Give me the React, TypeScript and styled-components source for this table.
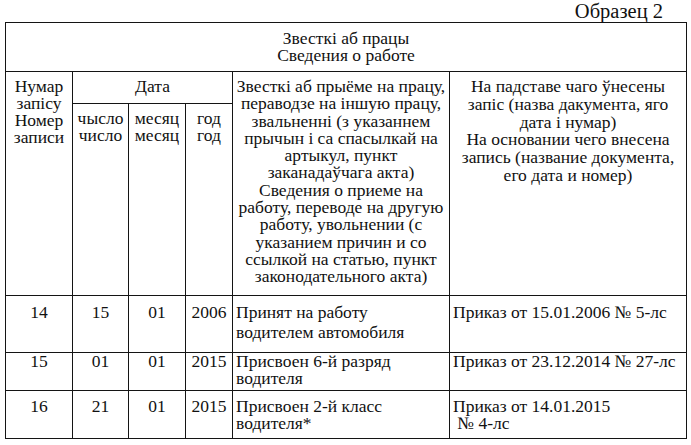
import React from 'react'
import styled, { createGlobalStyle } from 'styled-components'

const GlobalStyle = createGlobalStyle`
    html, body {
        margin: 0;
        padding: 0;
        background: #ffffff;
    }
    body {
        font-family: "Liberation Serif", "Times New Roman", serif;
        color: #111111;
    }
`

const Page = styled.div`
    width: 691px;
    height: 445px;
    padding-left: 5px;
    box-sizing: border-box;
    overflow: hidden;
`

const Caption = styled.div`
    width: 681px;
    height: 22px;
    padding-right: 23px;
    box-sizing: border-box;
    text-align: right;
    font-family: "Liberation Serif", "Times New Roman", serif;
    font-size: 20.5px;
    line-height: 22px;
`

const Sheet = styled.table`
    width: 681px;
    border-collapse: collapse;
    table-layout: fixed;
    font-family: "Liberation Serif", "Times New Roman", serif;
    font-size: 17.5px;
    color: #111111;
`

const Col = styled.col<{ $w: number }>`
    width: ${(p) => p.$w}px;
`

const Row = styled.tr<{ $h: number }>`
    height: ${(p) => p.$h}px;
`

const Cell = styled.td<{
    $align?: 'left' | 'center'
    $valign?: 'top' | 'middle'
    $pt?: number
    $lh?: number
}>`
    border: 1px solid #141414;
    padding: ${(p) => p.$pt ?? 0}px ${(p) => (p.$align === 'left' ? 3 : 0)}px 0;
    text-align: ${(p) => p.$align ?? 'center'};
    vertical-align: ${(p) => p.$valign ?? 'top'};
    line-height: ${(p) => p.$lh ?? 17.3}px;
    white-space: nowrap;
    overflow: hidden;
`

const Line = styled.span`
    display: block;
`

const lines = (text: string) =>
    text.split('\n').map((t, i) => <Line key={i}>{t}</Line>)

const entries = [
    { no: '14', day: '15', month: '01', year: '2006', what: 'Принят на работу\nводителем автомобиля', basis: 'Приказ от 15.01.2006 № 5-лс', h: 57, pt: 7, lh: 19.5 },
    { no: '15', day: '01', month: '01', year: '2015', what: 'Присвоен 6-й разряд\nводителя', basis: 'Приказ от 23.12.2014 № 27-лс', h: 38, pt: 0, lh: 16.5 },
    { no: '16', day: '21', month: '01', year: '2015', what: 'Присвоен 2-й класс\nводителя*', basis: 'Приказ от 14.01.2015\n\u00a0№ 4-лс', h: 48, pt: 7, lh: 17 },
]

const App: React.FC = () => {
    return (
        <Page>
            <GlobalStyle />
            <Caption>Образец 2</Caption>
            <Sheet>
                <colgroup>
                    <Col $w={67} />
                    <Col $w={56} />
                    <Col $w={57} />
                    <Col $w={47} />
                    <Col $w={217} />
                    <Col $w={237} />
                </colgroup>
                <tbody>
                    <Row $h={49}>
                        <Cell colSpan={6} $valign="middle" $lh={17}>
                            {lines('Звесткі аб працы\nСведения о работе')}
                        </Cell>
                    </Row>
                    <Row $h={32}>
                        <Cell rowSpan={2} $pt={6} $lh={17}>
                            {lines('Нумар\nзапісу\nНомер\nзаписи')}
                        </Cell>
                        <Cell colSpan={3} $pt={6}>
                            Дата
                        </Cell>
                        <Cell rowSpan={2} $pt={6}>
                            {lines(
                                'Звесткі аб прыёме на працу,\nпераводзе на іншую працу,\nзвальненні (з указаннем\nпрычын і са спасылкай на\nартыкул, пункт\nзаканадаўчага акта)\nСведения о приеме на\nработу, переводе на другую\nработу, увольнении (с\nуказанием причин и со\nссылкой на статью, пункт\nзаконодательного акта)'
                            )}
                        </Cell>
                        <Cell rowSpan={2} $pt={6} $lh={17.8}>
                            {lines(
                                'На падставе чаго ўнесены\nзапіс (назва дакумента, яго\nдата і нумар)\nНа основании чего внесена\nзапись (название документа,\nего дата и номер)'
                            )}
                        </Cell>
                    </Row>
                    <Row $h={192}>
                        <Cell $pt={6} $lh={16.5}>{lines('чысло\nчисло')}</Cell>
                        <Cell $pt={6} $lh={16.5}>{lines('месяц\nмесяц')}</Cell>
                        <Cell $pt={6} $lh={16.5}>{lines('год\nгод')}</Cell>
                    </Row>
                    {entries.map((e) => (
                        <Row key={e.no} $h={e.h}>
                            <Cell $pt={e.pt} $lh={e.lh}>{e.no}</Cell>
                            <Cell $pt={e.pt} $lh={e.lh}>{e.day}</Cell>
                            <Cell $pt={e.pt} $lh={e.lh}>{e.month}</Cell>
                            <Cell $pt={e.pt} $lh={e.lh}>{e.year}</Cell>
                            <Cell $align="left" $pt={e.pt} $lh={e.lh}>
                                {lines(e.what)}
                            </Cell>
                            <Cell $align="left" $pt={e.pt} $lh={e.lh}>
                                {lines(e.basis)}
                            </Cell>
                        </Row>
                    ))}
                </tbody>
            </Sheet>
        </Page>
    )
}

export default App
